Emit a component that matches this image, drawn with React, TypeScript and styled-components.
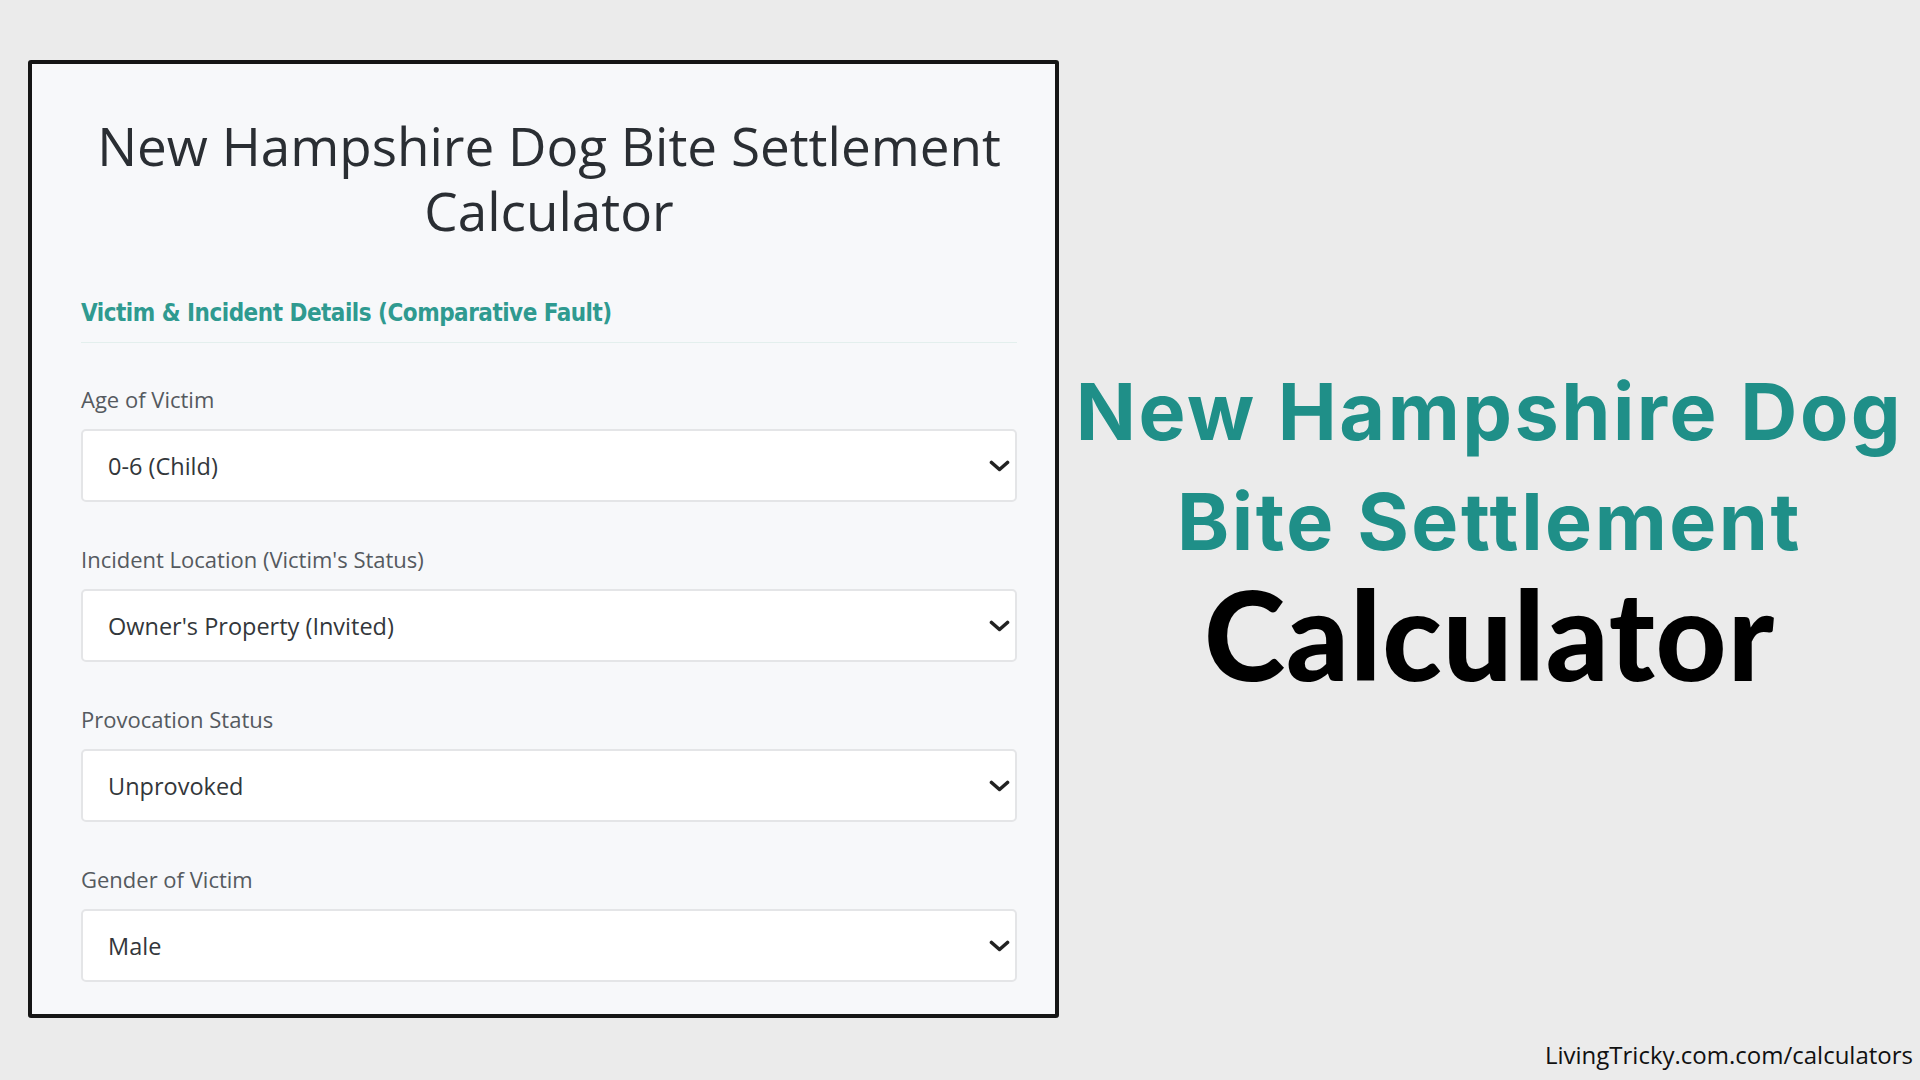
import React from 'react';
import styled, { createGlobalStyle } from 'styled-components';

const GlobalStyle = createGlobalStyle`
    html, body {
        margin: 0;
        padding: 0;
        background: #ebebeb;
    }
`;

const Page = styled.div`
    width: 1920px;
    height: 1080px;
    display: flex;
    box-sizing: border-box;
    overflow: hidden;
`;

const Card = styled.div`
    box-sizing: border-box;
    width: 1031px;
    height: 958px;
    margin: 60px 0 0 28px;
    padding: 49px 38px 0 49px;
    background: #f7f8fa;
    border: 4px solid #151515;
    border-radius: 3px;
    display: flex;
    flex-direction: column;
`;

const Title = styled.h1`
    margin: 0;
    font-family: "Open Sans", sans-serif;
    font-weight: 500;
    font-size: 53px;
    line-height: 65px;
    color: #2a2e33;
    text-align: center;
`;

const Section = styled.h2`
    margin: 54px 0 0;
    padding-bottom: 13px;
    border-bottom: 1px solid #e3efed;
    font-family: "DejaVu Sans Condensed", "DejaVu Sans", sans-serif;
    font-stretch: condensed;
    font-weight: 700;
    font-size: 24px;
    line-height: 32px;
    letter-spacing: -0.5px;
    color: #2f9a90;
`;

const Fields = styled.div`
    display: flex;
    flex-direction: column;
    gap: 42px;
    margin-top: 41px;
`;

const Field = styled.div`
    display: flex;
    flex-direction: column;
    gap: 15px;
`;

const Label = styled.label`
    font-family: "Open Sans", sans-serif;
    font-size: 22px;
    line-height: 30px;
    color: #555a5f;
`;

const SelectWrap = styled.div`
    position: relative;
    height: 73px;
`;

const Select = styled.select`
    appearance: none;
    box-sizing: border-box;
    width: 100%;
    height: 100%;
    padding: 0 50px 0 25px;
    background: #ffffff;
    border: 2px solid #e4e5e7;
    border-radius: 5px;
    font-family: "Open Sans", sans-serif;
    font-size: 23.5px;
    color: #33373b;
    outline: none;
`;

const Chevron = styled.svg`
    position: absolute;
    right: 7px;
    top: 50%;
    width: 21px;
    height: 12px;
    margin-top: -6px;
    pointer-events: none;
`;

const Side = styled.div`
    flex: 1;
    display: flex;
    flex-direction: column;
    align-items: center;
`;

const Headline = styled.div`
    margin-top: 356px;
    font-family: Inter, sans-serif;
    font-weight: 700;
    font-size: 79px;
    line-height: 110px;
    letter-spacing: 2.5px;
    color: #1f8f88;
    text-align: center;
`;

const Big = styled.div`
    margin-top: -4px;
    font-family: Lato, sans-serif;
    font-weight: 900;
    font-size: 123px;
    line-height: 123px;
    letter-spacing: 1px;
    color: #000;
`;

const Footer = styled.div`
    margin-top: auto;
    align-self: flex-end;
    padding: 0 7px 11px 0;
    font-family: "Open Sans", sans-serif;
    font-size: 24px;
    line-height: 28px;
    color: #111;
`;

const fields = [
    { label: 'Age of Victim', value: '0-6 (Child)' },
    { label: 'Incident Location (Victim\'s Status)', value: 'Owner\'s Property (Invited)' },
    { label: 'Provocation Status', value: 'Unprovoked' },
    { label: 'Gender of Victim', value: 'Male' },
];

const ArrowIcon = () => (
    <Chevron viewBox="0 0 21 12">
        <path d="M2.5 2.5 L10.5 9.5 L18.5 2.5" fill="none" stroke="#222" strokeWidth="3.6" strokeLinecap="round" strokeLinejoin="round" />
    </Chevron>
);

export default function App() {
    return (
        <>
            <GlobalStyle />
            <Page>
                <Card>
                    <Title>New Hampshire Dog Bite Settlement Calculator</Title>
                    <Section>Victim &amp; Incident Details (Comparative Fault)</Section>

                    <Fields>
                        {fields.map((f) => (
                            <Field key={f.label}>
                                <Label>{f.label}</Label>
                                <SelectWrap>
                                    <Select defaultValue={f.value}>
                                        <option>{f.value}</option>
                                    </Select>
                                    <ArrowIcon />
                                </SelectWrap>
                            </Field>
                        ))}
                    </Fields>
                </Card>

                <Side>
                    <Headline>New Hampshire Dog<br />Bite Settlement</Headline>
                    <Big>Calculator</Big>
                    <Footer>LivingTricky.com.com/calculators</Footer>
                </Side>
            </Page>
        </>
    );
}
